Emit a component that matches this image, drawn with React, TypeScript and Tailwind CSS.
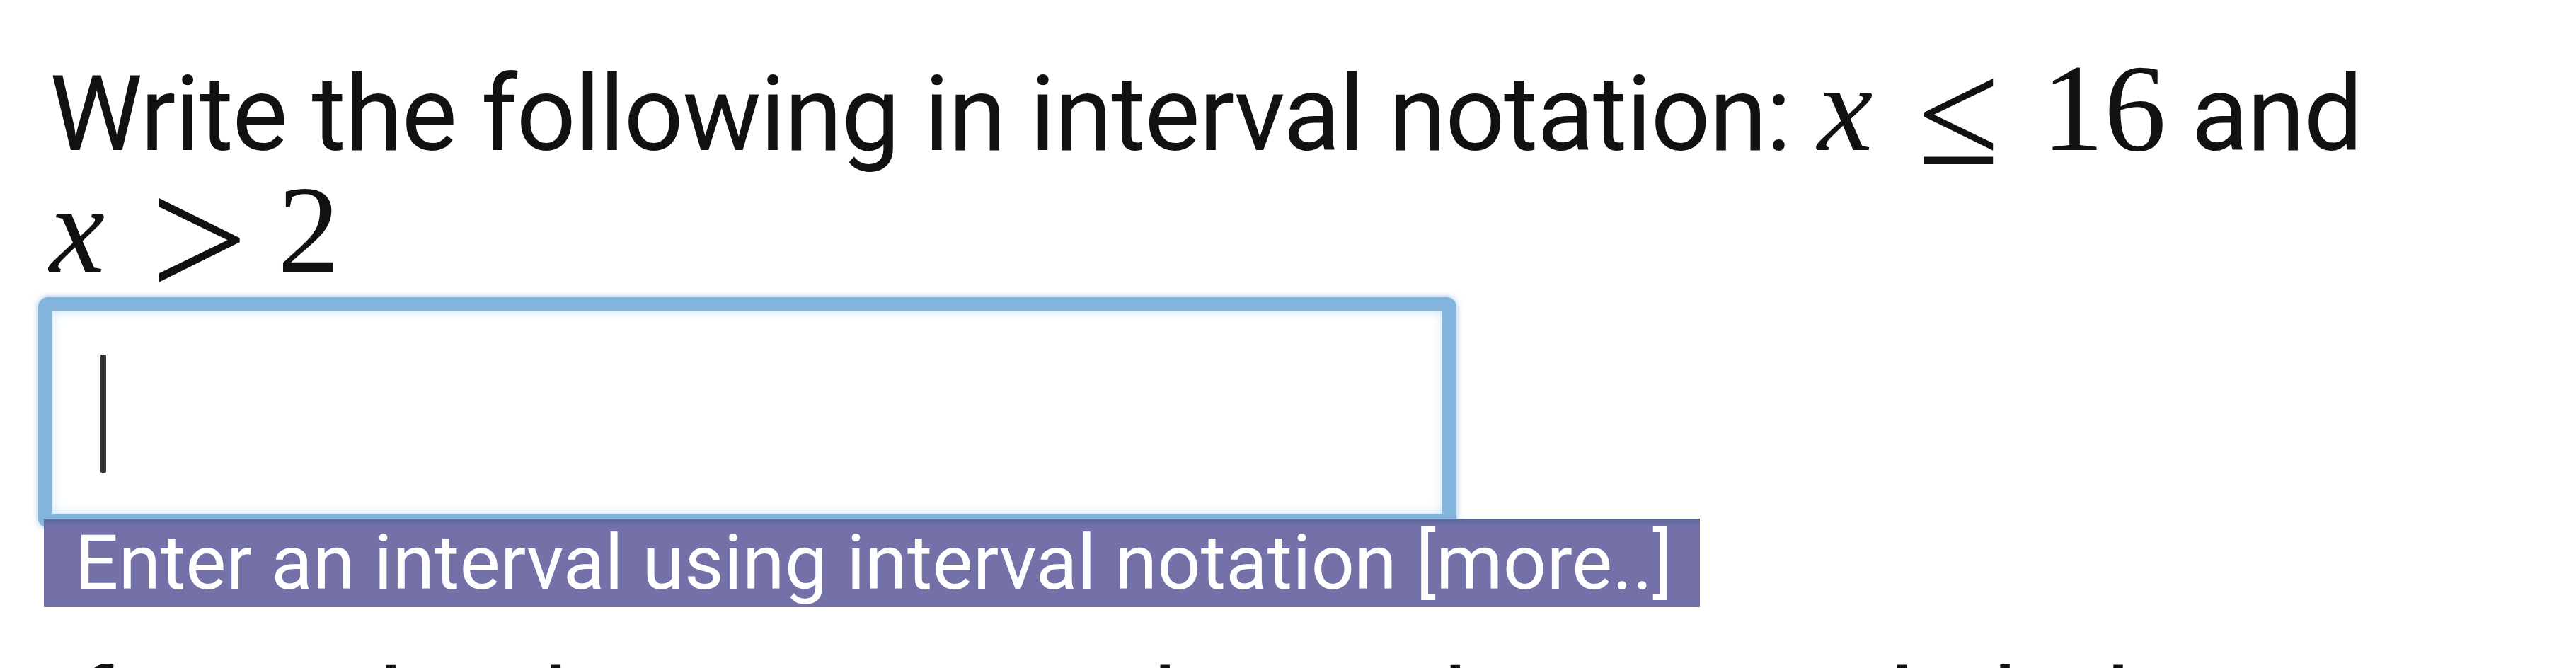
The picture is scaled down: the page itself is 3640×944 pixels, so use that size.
import React from "react";

const sans = "font-['Roboto','Liberation_Sans',sans-serif]";
const serif = "font-['Liberation_Serif','DejaVu_Serif',serif]";

// inline math in the question text; leading-[0] so it never grows the line box
function MathBit({ children, className = "" }: { children: React.ReactNode; className?: string }) {
  return (
    <span className={`${serif} whitespace-nowrap text-[176px] leading-[0] tracking-normal text-[#111] ${className}`}>
      {children}
    </span>
  );
}

function AnswerBox() {
  return (
    <div className="relative w-[2004px] h-[326px] rounded-[14px] border-[20px] border-[#82b4dc] bg-white shadow-[0_0_10px_rgba(120,170,220,0.7),inset_0_0_14px_rgba(170,210,245,0.7)] pl-[68px] pt-[61px]">
      <div className="w-[8px] h-[167px] bg-[#333] rounded-[2px]" />
    </div>
  );
}

export default function App() {
  return (
    <div className={`${sans} bg-white min-h-[944px] pl-[70px] pr-[70px] pt-[76px] text-[#111]`}>
      <p className="text-[148px] leading-[172px] tracking-[-1.5px]">
        Write the following in interval notation:{" "}
        <MathBit className="ml-[3px]">
          <span className="italic">x</span>
          <span className="ml-[63px] text-[211px] align-[-20px]">≤</span>
          <span className="ml-[60px]">16</span>
        </MathBit>{" "}
        and{" "}
        <MathBit>
          <span className="italic">x</span>
          <span className="ml-[64px] text-[245px] align-[-37px]">&gt;</span>
          <span className="ml-[42px]">2</span>
        </MathBit>
      </p>

      <div className="-ml-[16px]">
        <AnswerBox />
        <div className="relative z-10 -mt-[13px] ml-[8px] w-[2340px] bg-[#7371a8] pl-[44px] text-[108px] leading-[125px] text-white shadow-[inset_0_9px_6px_-4px_rgba(80,100,150,0.7)]">
          Enter an interval using interval notation [more..]
        </div>
      </div>

      <p className="mt-[57px] text-[148px] leading-[172px] tracking-[-1.5px]">
        If you check your interval, use the example below.
      </p>
    </div>
  );
}
